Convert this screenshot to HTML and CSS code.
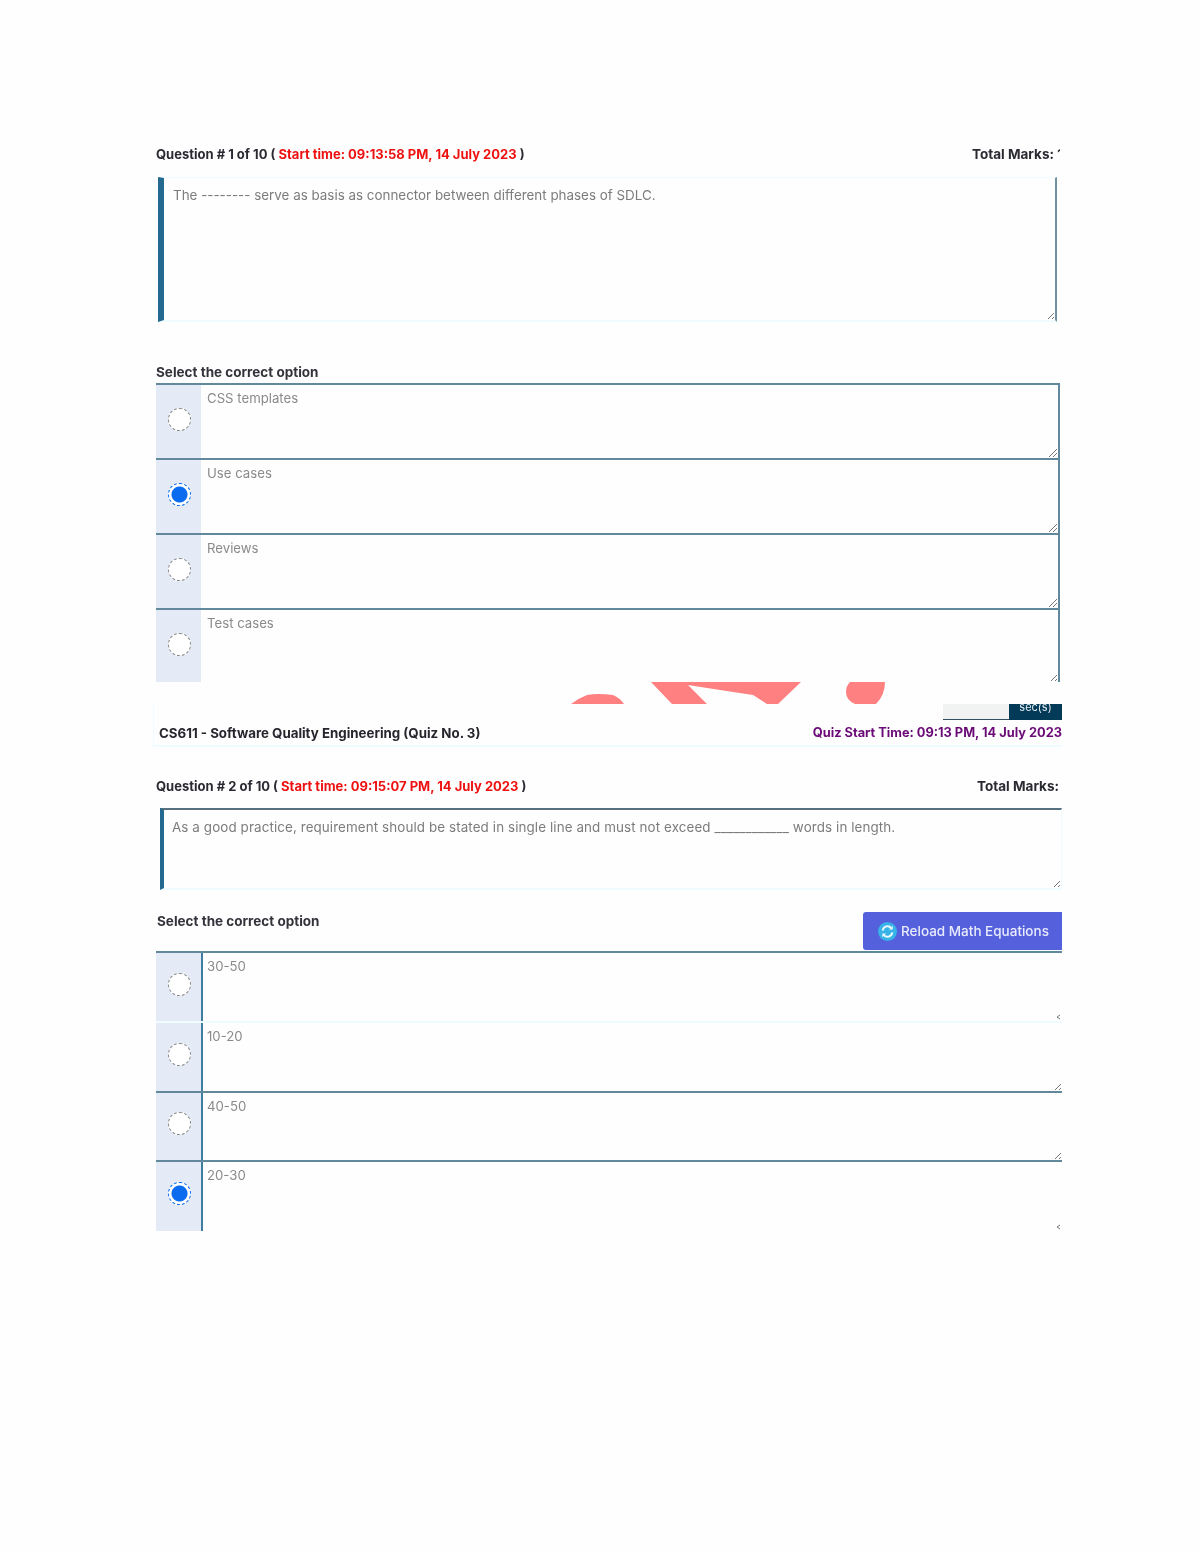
FILE: index.html
```html
<!DOCTYPE html>
<html lang="en">
<head>
<meta charset="utf-8">
<title>CS611 Quiz</title>
<link rel="stylesheet" href="styles.css">
</head>
<body>
<main class="page">
  <section class="q1">
    <div class="q-head">
      <div class="q-title">Question # 1 of 10 ( <span class="red">Start time: 09:13:58 PM, 14 July 2023</span> )</div>
      <div class="marks marks-1">Total Marks: 1</div>
    </div>
    <div class="q-box q-box-1">
      The -------- serve as basis as connector between different phases of SDLC.
      <svg class="grip" viewBox="0 0 10 10"><path d="M9 3 3 9M9 7 7 9"/></svg>
    </div>
    <div class="select-label select-1">Select the correct option</div>
    <div class="options opts-1">
      <div class="opt h75"><div class="radio-cell"><span class="radio"></span></div><div class="opt-text">CSS templates<svg class="grip" viewBox="0 0 10 10"><path d="M9 1 1 9M9 5 5 9"/></svg></div></div>
      <div class="opt h75"><div class="radio-cell"><span class="radio on"></span></div><div class="opt-text">Use cases<svg class="grip" viewBox="0 0 10 10"><path d="M9 1 1 9M9 5 5 9"/></svg></div></div>
      <div class="opt h75"><div class="radio-cell"><span class="radio"></span></div><div class="opt-text">Reviews<svg class="grip" viewBox="0 0 10 10"><path d="M9 1 1 9M9 5 5 9"/></svg></div></div>
      <div class="opt h72"><div class="radio-cell"><span class="radio"></span></div><div class="opt-text">Test cases<svg class="grip" viewBox="0 0 10 10"><path d="M9 3 3 9M9 7 7 9"/></svg></div></div>
    </div>
  </section>

  <svg class="banner" viewBox="156 682 906 22" aria-hidden="true">
    <path d="M571 704Q579 698 587 695Q598 693 613 695Q620 698 624 704Z"/>
    <path d="M651 682 672 704H707L688 685 720 690 753 695 767 704H778L801 682Z"/>
    <path d="M850 682H885Q885 695 876 704H855Q846 700 846 692Q846 686 850 682Z"/>
  </svg>

  <section class="q2">
    <div class="course-bar">
      <div class="timer"><span class="timer-blank"></span><span class="timer-val">sec(s)</span></div>
      <div class="course-row">
        <div class="course">CS611 - Software Quality Engineering (Quiz No. 3)</div>
        <div class="quiz-time">Quiz Start Time: 09:13 PM, 14 July 2023</div>
      </div>
    </div>
    <div class="q-head q-head-2">
      <div class="q-title">Question # 2 of 10 ( <span class="red">Start time: 09:15:07 PM, 14 July 2023</span> )</div>
      <div class="marks">Total Marks:</div>
    </div>
    <div class="q-box q-box-2">
      As a good practice, requirement should be stated in single line and must not exceed ____________ words in length.
      <svg class="grip" viewBox="0 0 10 10"><path d="M9 3 3 9M9 7 7 9"/></svg>
    </div>
    <div class="select-row">
      <div class="select-label">Select the correct option</div>
      <button class="reload" type="button">
        <svg class="reload-icon" viewBox="0 0 20 20"><circle cx="10" cy="10" r="10"/><path d="M5 9a5 5 0 0 1 9-2.5M15 11a5 5 0 0 1-9 2.5"/><path class="tip" d="M15.500 4v4h-4zM4.500 16v-4h4z"/></svg>
        Reload Math Equations
      </button>
    </div>
    <div class="options opts-2">
      <div class="opt h70 pale"><div class="radio-cell"><span class="radio"></span></div><div class="opt-text">30-50<svg class="grip" viewBox="0 0 10 10"><path d="M8 4 5 6 8 8"/></svg></div></div>
      <div class="opt h70"><div class="radio-cell"><span class="radio"></span></div><div class="opt-text">10-20<svg class="grip" viewBox="0 0 10 10"><path d="M9 3 3 9M9 7 7 9"/></svg></div></div>
      <div class="opt h69"><div class="radio-cell"><span class="radio"></span></div><div class="opt-text">40-50<svg class="grip" viewBox="0 0 10 10"><path d="M9 3 3 9M9 7 7 9"/></svg></div></div>
      <div class="opt h69"><div class="radio-cell"><span class="radio on"></span></div><div class="opt-text">20-30<svg class="grip" viewBox="0 0 10 10"><path d="M8 4 5 6 8 8"/></svg></div></div>
    </div>
  </section>
</main>
</body>
</html>
```
FILE: styles.css
```css
* { box-sizing: border-box; }
html, body { margin: 0; background: #fefefe; }
body { font-family: "Inter", "Open Sans", sans-serif; color: #222; height: 1553px; overflow: hidden; }
.page { padding: 145px 138px 0 156px; filter: blur(0.4px); }

.q-head { display: flex; justify-content: space-between; align-items: center; height: 18px; font-size: 13px; font-weight: 700; color: #2a2a33; }
.q-title { white-space: nowrap; }
.red { color: #ee1111; }
.marks { padding-right: 3px; white-space: nowrap; font-size: 13.500px; }
.marks-1 { width: 88px; overflow: hidden; padding-right: 0; margin-right: 2px; }

.q-box { position: relative; font-size: 13.400px; color: #7c7c7c; white-space: nowrap; }
.q-box-1 { margin: 14px 5px 0 2px; height: 145px; padding: 9px 0 0 9px; border-left: 6px solid #24698f; border-right: 2px solid #6f929e; border-top: 1px solid #eefbff; border-bottom: 2px solid #eefbff; }
.q-box-2 { margin: 13px 0 0 4px; height: 82px; padding: 9px 0 0 8px; letter-spacing: 0.100px; border-left: 4px solid #24698f; border-top: 2px solid #56707f; border-bottom: 2px solid #eefbff; border-right: 1px solid #eefbff; }

.grip { position: absolute; right: 0; bottom: 0; width: 10px; height: 10px; fill: none; stroke: #777; stroke-width: 1; }

.select-label { font-size: 13.500px; font-weight: 700; color: #33333b; line-height: 16px; white-space: nowrap; }
.select-1 { margin-top: 42px; height: 20px; }

.options { border-top: 2px solid #62899b; }
.opts-1 { margin-right: 2px; margin-top: -1px; border-right: 2px solid #62899b; }
.opt { display: flex; border-bottom: 2px solid #62899b; }
.opt:last-child { border-bottom: 0; }
.opt.pale { border-bottom: 2px solid #eefbff; }
.h75 { height: 75px; }
.h72 { height: 72px; }
.h70 { height: 70px; }
.h69 { height: 69px; }

.radio-cell { flex: none; width: 45px; background: #e4ebf6; display: flex; align-items: center; justify-content: center; padding-left: 1px; }
.opts-2 .radio-cell { width: 47px; border-right: 2px solid #3f7da0; padding: 0 0 0 1px; }
.radio { width: 23px; height: 23px; border-radius: 50%; background: #fff; border: 1px dashed #8a8a8a; display: block; position: relative; top: -2px; }
.opts-2 .radio { top: -3px; }
.radio.on { border-color: #0b6cf0; background: radial-gradient(circle, #0b6cf0 0 7.500px, #fff 8.500px); }

.opt-text { flex: 1; position: relative; font-size: 13.200px; color: #8a8a8a; padding: 5px 0 0 6px; line-height: 16px; }
.opts-2 .opt-text { padding-left: 4px; }

.banner { display: block; width: 906px; height: 22px; fill: #ff8080; }

.course-bar { height: 43px; border-bottom: 2px solid #eefbff; border-left: 1px solid #eefbff; margin-left: -3px; }
.timer { display: flex; justify-content: flex-end; height: 16px; }
.timer-blank { width: 66px; background: #f1f3f3; border-bottom: 1px solid #33505f; }
.timer-val { width: 53px; background: #033a57; color: #e6eef3; font-size: 11px; line-height: 7px; height: 16px; text-align: center; overflow: hidden; }
.course-row { display: flex; justify-content: space-between; align-items: center; height: 25px; padding-left: 5px; font-size: 12.800px; font-weight: 700; white-space: nowrap; }
.course { color: #26262e; font-size: 13.300px; }
.quiz-time { color: #6a0a76; }

.q-head-2 { margin-top: 30px; }

.select-row { display: flex; justify-content: space-between; align-items: flex-start; height: 61px; padding-top: 22px; }
.select-row .select-label { padding-top: 1px; margin-left: 1px; }
.reload { height: 38px; width: 199px; display: flex; align-items: center; gap: 4px; padding: 0 0 0 15px; margin: 0; border: 0; border-radius: 3px 0 0 3px; background: #5560dc; color: #e8ebfb; font: 500 13.500px "Inter", sans-serif; white-space: nowrap; }
.reload-icon { width: 19px; height: 19px; flex: none; }
.reload-icon circle { fill: #38b3e8; }
.reload-icon path { fill: none; stroke: #eaf7fd; stroke-width: 2; }
.reload-icon .tip { fill: #eaf7fd; stroke: none; }
```
